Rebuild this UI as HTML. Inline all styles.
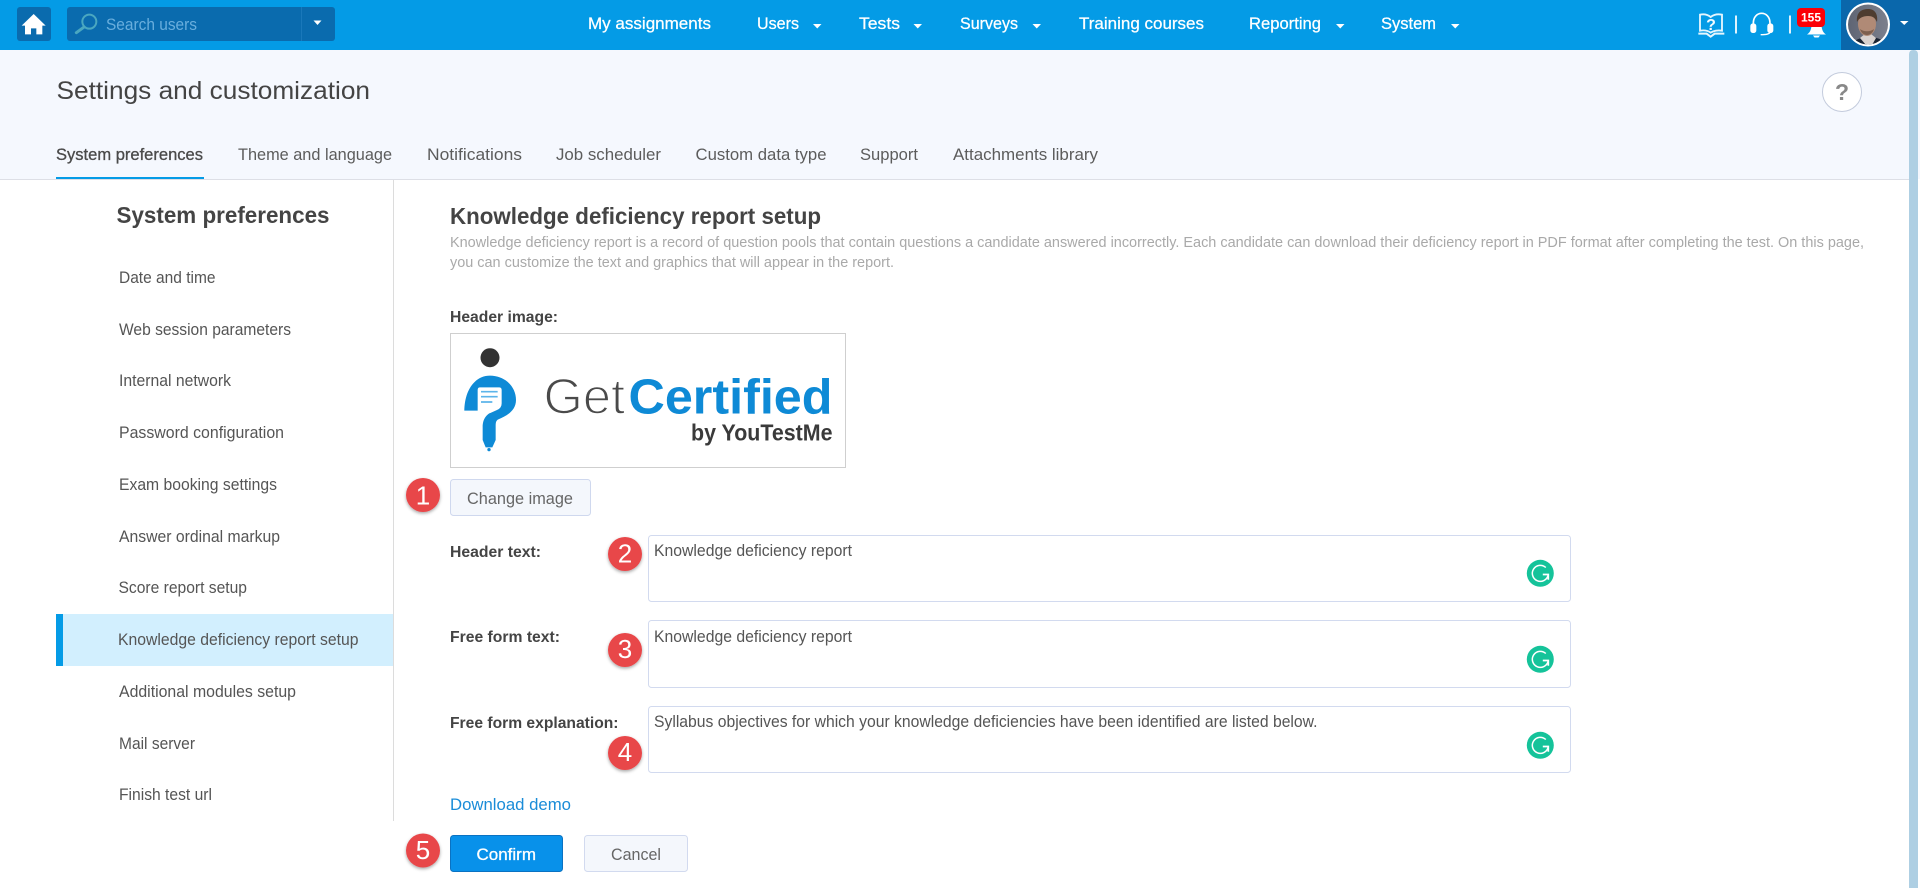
<!DOCTYPE html>
<html lang="en">
<head>
<meta charset="utf-8">
<title>Settings and customization</title>
<style>
html,body{margin:0;padding:0;width:1920px;height:888px;overflow:hidden;background:#fff}
svg{display:block;position:absolute;left:0;top:0}
text{font-family:"Liberation Sans",sans-serif}
.nav{fill:#fff;font-size:16.5px;stroke:#fff;stroke-width:.25}
.tab{fill:#5c5c5c;font-size:16.5px}
.item{fill:#555;font-size:16.5px}
.lab{fill:#444;font-size:16px;font-weight:700}
.desc{fill:#a9a9a9;font-size:15px}
.val{fill:#555;font-size:16.5px}
.num{fill:#fff;font-size:26px;text-anchor:middle}
</style>
</head>
<body>
<svg width="1920" height="888" viewBox="0 0 1920 888" xmlns="http://www.w3.org/2000/svg">
<defs>
<filter id="sh" x="-30%" y="-30%" width="160%" height="170%"><feDropShadow dx="0" dy="1.5" stdDeviation="1.5" flood-color="#000" flood-opacity=".35"/></filter>
<clipPath id="av"><circle cx="1868" cy="24.5" r="20"/></clipPath>
<linearGradient id="avbg" x1="0" y1="0" x2="1" y2="0"><stop offset="0" stop-color="#5d6372"/><stop offset="1" stop-color="#7d818e"/></linearGradient>
<g id="gr">
<circle r="13.5" fill="#15c39a"/>
<path d="M5.500 -5.800A8 8 0 1 0 7.800 2" fill="none" stroke="#fff" stroke-width="1.500"/>
<path d="M2.500 1.200H8V6.500" fill="none" stroke="#fff" stroke-width="1.700"/>
</g>
</defs>

<!-- top bar -->
<rect width="1920" height="50" fill="#049be6"/>
<rect x="17" y="7" width="34" height="34" rx="3" fill="#0a6bae"/>
<path transform="translate(10 0) scale(.3333)" d="M71 42L107 77H97V103H79V85H63V103H45V77H35Z" fill="#fff"/>
<rect x="67" y="7" width="268" height="34" rx="3" fill="#0a6bae"/>
<rect x="301" y="7" width="1" height="34" fill="#1a78ba"/>
<g transform="translate(10 0) scale(.3333)" fill="none" stroke="#4aa7c0">
<circle cx="238" cy="65" r="21" stroke-width="6"/>
<path d="M221 82L199 98" stroke-width="9" stroke-linecap="round"/>
</g>
<text x="106" y="30" font-size="16.500" fill="#69aedd" textLength="91" lengthAdjust="spacingAndGlyphs">Search users</text>
<path d="M313.500 20.500h8l-4 4.500z" fill="#fff"/>

<text class="nav" x="588" y="29" textLength="123" lengthAdjust="spacingAndGlyphs">My assignments</text>
<text class="nav" x="757" y="29" textLength="42" lengthAdjust="spacingAndGlyphs">Users</text>
<path d="M813 24h8.500l-4.250 4.500z" fill="#fff"/>
<text class="nav" x="859" y="29" textLength="41" lengthAdjust="spacingAndGlyphs">Tests</text>
<path d="M913.500 24h8.500l-4.250 4.500z" fill="#fff"/>
<text class="nav" x="960" y="29" textLength="58" lengthAdjust="spacingAndGlyphs">Surveys</text>
<path d="M1032.500 24h8.500l-4.250 4.500z" fill="#fff"/>
<text class="nav" x="1079" y="29" textLength="125" lengthAdjust="spacingAndGlyphs">Training courses</text>
<text class="nav" x="1249" y="29" textLength="72" lengthAdjust="spacingAndGlyphs">Reporting</text>
<path d="M1336 24h8.500l-4.250 4.500z" fill="#fff"/>
<text class="nav" x="1381" y="29" textLength="55" lengthAdjust="spacingAndGlyphs">System</text>
<path d="M1451 24h8.500l-4.250 4.500z" fill="#fff"/>

<!-- book icon -->
<g transform="translate(1690 0) scale(.3333)" fill="none" stroke="#e6f6fe">
<path d="M62 51C52 43 40 42 30 44V92C42 90 54 92 62 98C70 92 84 90 96 92V44C86 42 72 43 62 51Z" stroke-width="5.500"/>
<path d="M25 101H50L62 110L74 101H103" stroke-width="6"/>
</g>
<text x="1711" y="30" font-size="16" font-weight="700" fill="#f2faff" text-anchor="middle">?</text>
<rect x="1735" y="15.500" width="2" height="18" fill="#dff3fd"/>
<!-- headset -->
<g transform="translate(1690 0) scale(.3333)">
<path d="M190 82V70C190 30 240 30 240 70V82" fill="none" stroke="#fff" stroke-width="5"/>
<rect x="181" y="70" width="18" height="29" rx="8" fill="#fff"/>
<rect x="232" y="70" width="18" height="29" rx="8" fill="#fff"/>
<path d="M241 96C238 103 228 104 212 104" fill="none" stroke="#fff" stroke-width="4"/>
</g>
<rect x="1789" y="15.500" width="2" height="18" fill="#dff3fd"/>
<!-- bell -->
<path d="M1807 34.500C1810 32.500 1811 30 1811.500 26H1821.500C1822 30 1823 32.500 1826 34.500Z" fill="#fff"/>
<path d="M1813 35.500h7l-1.500 2h-4z" fill="#fff"/>
<rect x="1797" y="8" width="28" height="19" rx="4" fill="#fb0007"/>
<text x="1811" y="21.500" font-size="12" font-weight="700" fill="#fff" text-anchor="middle" textLength="20" lengthAdjust="spacingAndGlyphs">155</text>
<!-- user -->
<rect x="1841" width="79" height="50" fill="#0a67ab"/>
<circle cx="1868" cy="24.500" r="22" fill="#fff"/>
<g clip-path="url(#av)">
<rect x="1846" y="3" width="44" height="44" fill="url(#avbg)"/>
<path d="M1851 46C1853 40 1860 38 1866 37L1872 37C1879 38 1885 41 1888 46Z" fill="#1b2433"/>
<path d="M1860 38L1866 45L1872 45L1876 38L1871 34H1865Z" fill="#d9d2cf"/>
<ellipse cx="1867" cy="24" rx="9" ry="12" fill="#b08a76"/>
<path d="M1857 22C1856 12 1862 9 1868 9C1875 9 1878 14 1877 22C1875 18 1873 16 1868 16C1863 16 1859 18 1857 22Z" fill="#4e3c30"/>
<path d="M1860 29C1864 32 1870 32 1874 29C1872 37 1862 37 1860 29Z" fill="#7d5f4e"/>
</g>
<path d="M1900 21h8.500l-4.250 4z" fill="#fff"/>

<!-- page header -->
<rect y="50" width="1920" height="129" fill="#f5f8fe"/>
<rect y="179" width="1909" height="1" fill="#dddfe6"/>
<text x="56.500" y="99" font-size="25" fill="#444" textLength="313.500" lengthAdjust="spacingAndGlyphs">Settings and customization</text>
<circle cx="1842" cy="92" r="19.500" fill="#fff" stroke="#c3cbdc"/>
<text x="1842" y="100" font-size="23" font-weight="700" fill="#888" text-anchor="middle">?</text>

<text class="tab" x="56" y="160" textLength="147" lengthAdjust="spacingAndGlyphs" style="fill:#4a4a4a;stroke:#4a4a4a;stroke-width:.3">System preferences</text>
<text class="tab" x="238" y="160" textLength="154" lengthAdjust="spacingAndGlyphs">Theme and language</text>
<text class="tab" x="427" y="160" textLength="95" lengthAdjust="spacingAndGlyphs">Notifications</text>
<text class="tab" x="556" y="160" textLength="105" lengthAdjust="spacingAndGlyphs">Job scheduler</text>
<text class="tab" x="695.500" y="160" textLength="131" lengthAdjust="spacingAndGlyphs">Custom data type</text>
<text class="tab" x="860" y="160" textLength="58" lengthAdjust="spacingAndGlyphs">Support</text>
<text class="tab" x="953" y="160" textLength="145" lengthAdjust="spacingAndGlyphs">Attachments library</text>
<rect x="56" y="177" width="148" height="2" fill="#049be6"/>

<!-- sidebar -->
<rect x="393" y="180" width="1" height="641" fill="#dcdcdc"/>
<text x="116.500" y="223" font-size="23" font-weight="700" fill="#444" textLength="213" lengthAdjust="spacingAndGlyphs">System preferences</text>
<rect x="56" y="614" width="337" height="52" fill="#d2effe"/>
<rect x="56" y="614" width="7" height="52" fill="#049be6"/>
<text class="item" x="119" y="283" textLength="96.500" lengthAdjust="spacingAndGlyphs">Date and time</text>
<text class="item" x="119" y="335" textLength="172" lengthAdjust="spacingAndGlyphs">Web session parameters</text>
<text class="item" x="119" y="386" textLength="112" lengthAdjust="spacingAndGlyphs">Internal network</text>
<text class="item" x="119" y="438" textLength="165" lengthAdjust="spacingAndGlyphs">Password configuration</text>
<text class="item" x="119" y="490" textLength="158" lengthAdjust="spacingAndGlyphs">Exam booking settings</text>
<text class="item" x="119" y="542" textLength="161" lengthAdjust="spacingAndGlyphs">Answer ordinal markup</text>
<text class="item" x="118.500" y="593" textLength="128.500" lengthAdjust="spacingAndGlyphs">Score report setup</text>
<text class="item" x="118" y="645" textLength="240.500" lengthAdjust="spacingAndGlyphs">Knowledge deficiency report setup</text>
<text class="item" x="119" y="697" textLength="177" lengthAdjust="spacingAndGlyphs">Additional modules setup</text>
<text class="item" x="119" y="749" textLength="76" lengthAdjust="spacingAndGlyphs">Mail server</text>
<text class="item" x="119" y="800" textLength="93" lengthAdjust="spacingAndGlyphs">Finish test url</text>

<!-- content -->
<text x="450" y="224" font-size="23.500" font-weight="700" fill="#444" textLength="371" lengthAdjust="spacingAndGlyphs">Knowledge deficiency report setup</text>
<text class="desc" x="450" y="247" textLength="1414" lengthAdjust="spacingAndGlyphs">Knowledge deficiency report is a record of question pools that contain questions a candidate answered incorrectly. Each candidate can download their deficiency report in PDF format after completing the test. On this page,</text>
<text class="desc" x="450" y="267" textLength="444" lengthAdjust="spacingAndGlyphs">you can customize the text and graphics that will appear in the report.</text>

<text class="lab" x="450" y="322" textLength="108" lengthAdjust="spacingAndGlyphs">Header image:</text>
<rect x="450.500" y="333.500" width="395" height="134" fill="#fff" stroke="#cfcfcf"/>
<!-- logo -->
<circle cx="490" cy="357.700" r="9.500" fill="#333"/>
<g transform="translate(455 340) scale(.3333)">
<path d="M28 215C28 150 60 107 105 107C150 107 183 140 183 180C183 212 155 228 130 238C122 242 122 250 122 260V300L112 322H92L83 300V262C83 235 95 222 118 212H28Z" fill="#0e8ad6"/>
<path d="M75 142H132Q140 142 140 150V190Q140 204 126 210L106 219Q92 222 78 218H68V150Q68 142 75 142Z" fill="#fff"/>
<path d="M78 155H128M78 170H128M78 186H112" stroke="#5cb4ea" stroke-width="5" fill="none"/>
<circle cx="102" cy="329" r="5" fill="#0e8ad6"/>
</g>
<text x="543.500" y="413.500" font-size="50" fill="#4a4a4a" stroke="#fff" stroke-width="1.500" textLength="81.500" lengthAdjust="spacingAndGlyphs">Get</text>
<text x="628.500" y="413.500" font-size="49" font-weight="700" fill="#0e8ad6" textLength="204" lengthAdjust="spacingAndGlyphs">Certified</text>
<text x="691" y="440.500" font-size="23" font-weight="700" fill="#3a3a3a" textLength="141.500" lengthAdjust="spacingAndGlyphs">by YouTestMe</text>

<rect x="450.500" y="479.500" width="140" height="36" rx="3" fill="#f4f7fc" stroke="#cfd8ee"/>
<text x="467" y="504" font-size="16.500" fill="#666" textLength="106" lengthAdjust="spacingAndGlyphs">Change image</text>

<text class="lab" x="450" y="557" textLength="91" lengthAdjust="spacingAndGlyphs">Header text:</text>
<text class="lab" x="450" y="642" textLength="110" lengthAdjust="spacingAndGlyphs">Free form text:</text>
<text class="lab" x="450" y="728" textLength="168.500" lengthAdjust="spacingAndGlyphs">Free form explanation:</text>

<rect x="648.500" y="535.500" width="922" height="66" rx="3" fill="#fff" stroke="#d2daef"/>
<rect x="648.500" y="620.500" width="922" height="67" rx="3" fill="#fff" stroke="#d2daef"/>
<rect x="648.500" y="706.500" width="922" height="66" rx="3" fill="#fff" stroke="#d2daef"/>
<text class="val" x="654" y="556" textLength="198" lengthAdjust="spacingAndGlyphs">Knowledge deficiency report</text>
<text class="val" x="654" y="642" textLength="198" lengthAdjust="spacingAndGlyphs">Knowledge deficiency report</text>
<text class="val" x="654" y="727" textLength="663.500" lengthAdjust="spacingAndGlyphs">Syllabus objectives for which your knowledge deficiencies have been identified are listed below.</text>
<use href="#gr" x="1540.300" y="573.300"/>
<use href="#gr" x="1540.300" y="659.300"/>
<use href="#gr" x="1540.300" y="745.300"/>

<text x="450" y="810" font-size="16.500" fill="#1a8cd8" textLength="121" lengthAdjust="spacingAndGlyphs">Download demo</text>

<rect x="450.500" y="835.500" width="112" height="36" rx="3" fill="#0891ea" stroke="#0a72c2"/>
<text x="476.500" y="860" font-size="16.500" fill="#fff" stroke="#fff" stroke-width=".3" textLength="59.500" lengthAdjust="spacingAndGlyphs">Confirm</text>
<rect x="584.500" y="835.500" width="103" height="36" rx="3" fill="#f4f7fc" stroke="#d2daef"/>
<text x="611" y="860" font-size="16.500" fill="#666" textLength="50" lengthAdjust="spacingAndGlyphs">Cancel</text>

<!-- numbered markers -->
<g filter="url(#sh)" fill="#e8464a">
<circle cx="423" cy="495" r="17"/>
<circle cx="625" cy="554" r="17"/>
<circle cx="625" cy="650" r="17"/>
<circle cx="625" cy="753" r="17"/>
<circle cx="423" cy="850.500" r="17"/>
</g>
<text class="num" x="423" y="504.300">1</text>
<text class="num" x="625" y="562.500">2</text>
<text class="num" x="625" y="658">3</text>
<text class="num" x="625" y="761">4</text>
<text class="num" x="423" y="859">5</text>

<!-- scrollbar -->
<path d="M1909 888V54.500Q1909 50 1913.500 50Q1918 50 1918 54.500V888Z" fill="#aecfe3"/>
</svg>
</body>
</html>
